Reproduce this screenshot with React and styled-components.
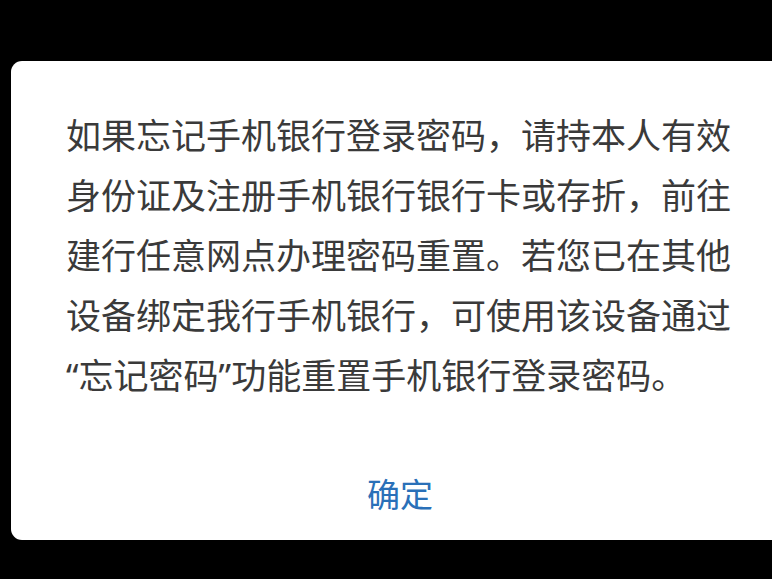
import React from 'react';
import styled, { createGlobalStyle } from 'styled-components';

const GlobalStyle = createGlobalStyle`
    html, body {
        margin: 0;
        padding: 0;
        background: #000;
        overflow: hidden;
    }
    body {
        font-family: "Noto Sans", "Noto Sans CJK SC", sans-serif;
    }
`

const Screen = styled.div`
    width: 772px;
    height: 579px;
    background: #000;
    padding-top: 61px;
    padding-left: 11px;
    box-sizing: border-box;
    overflow: hidden;
`

const Dialog = styled.div`
    width: 778px;
    height: 479px;
    background: #fff;
    border-radius: 11px;
    display: flex;
    flex-direction: column;
    box-sizing: border-box;
    padding: 45px 0 0 55px;
`

const Message = styled.p`
    margin: 0;
    width: 672px;
    font-size: 35px;
    line-height: 60px;
    color: #3a3a3a;
    font-weight: 400;
    line-break: anywhere;
`

const Footer = styled.div`
    margin-top: auto;
    height: 94px;
    display: flex;
    align-items: center;
    justify-content: center;
    margin-left: -55px;
`

const ConfirmButton = styled.button`
    border: none;
    background: none;
    font-family: inherit;
    font-size: 33px;
    color: #2a70b8;
    padding: 0 20px;
    cursor: pointer;
`

export default function App() {
    return (
        <Screen>
            <GlobalStyle />
            <Dialog>
                <Message>
                    如果忘记手机银行登录密码，请持本人有效身份证及注册手机银行银行卡或存折，前往建行任意网点办理密码重置。若您已在其他设备绑定我行手机银行，可使用该设备通过“忘记密码”功能重置手机银行登录密码。
                </Message>
                <Footer>
                    <ConfirmButton>确定</ConfirmButton>
                </Footer>
            </Dialog>
        </Screen>
    );
}
